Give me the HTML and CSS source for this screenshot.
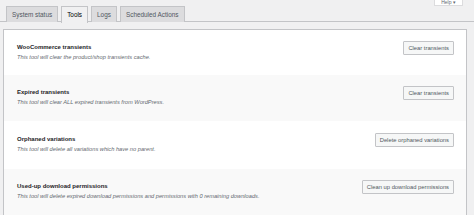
FILE: index.html
```html
<!DOCTYPE html>
<html>
<head>
<meta charset="utf-8">
<link rel="stylesheet" href="styles.css">
</head>
<body>
<div class="help-row"><button class="help">Help ▾</button></div>
<nav class="tabs">
  <a class="tab">System status</a>
  <a class="tab active">Tools</a>
  <a class="tab">Logs</a>
  <a class="tab">Scheduled Actions</a>
</nav>
<div class="table">
  <div class="row">
    <div class="info">
      <div class="title">WooCommerce transients</div>
      <div class="desc">This tool will clear the product/shop transients cache.</div>
    </div>
    <button class="btn">Clear transients</button>
  </div>
  <div class="row alt">
    <div class="info">
      <div class="title">Expired transients</div>
      <div class="desc">This tool will clear ALL expired transients from WordPress.</div>
    </div>
    <button class="btn">Clear transients</button>
  </div>
  <div class="row tall">
    <div class="info">
      <div class="title">Orphaned variations</div>
      <div class="desc">This tool will delete all variations which have no parent.</div>
    </div>
    <button class="btn">Delete orphaned variations</button>
  </div>
  <div class="row alt">
    <div class="info">
      <div class="title">Used-up download permissions</div>
      <div class="desc">This tool will delete expired download permissions and permissions with 0 remaining downloads.</div>
    </div>
    <button class="btn">Clean up download permissions</button>
  </div>
</div>
</body>
</html>
```

FILE: styles.css
```css
* { box-sizing: border-box; }
html, body { margin: 0; padding: 0; }
body {
  background: #f0f0f1;
  font-family: "Liberation Sans", Arial, sans-serif;
  color: #1d2327;
  width: 474px;
  height: 215px;
  overflow: hidden;
}
.help-row {
  display: flex;
  justify-content: flex-end;
  padding-right: 11px;
  height: 6px;
}
.help {
  height: 6px;
  width: 29px;
  padding: 0;
  background: #fff;
  border: 1px solid #dcdcde;
  border-top: none;
  font-family: inherit;
  font-size: 5px;
  line-height: 5px;
  color: #646970;
}
.tabs {
  display: flex;
  gap: 3px;
  padding-left: 6px;
  height: 16px;
  border-bottom: 1px solid #c3c4c7;
}
.tab {
  display: block;
  height: 16px;
  padding: 0 5px;
  border: 1px solid #c3c4c7;
  border-bottom: none;
  background: #dcdcde;
  color: #50575e;
  font-size: 6.4px;
  line-height: 15px;
}
.tab.active {
  background: #f0f0f1;
  color: #000;
  height: 17px;
  margin-bottom: -1px;
}
.table {
  margin: 7px 7px 0 3px;
  background: #fff;
  border: 1px solid #c3c4c7;
}
.row {
  display: flex;
  align-items: center;
  justify-content: space-between;
  height: 45px;
  padding: 0 12px 0 13px;
  background: #fff;
}
.row.alt { background: #f9f9f9; height: 46px; }
.row.tall { height: 48px; }
.info { display: flex; flex-direction: column; gap: 2px; margin-bottom: 2px; }
.title {
  font-size: 6px;
  font-weight: 600;
  line-height: 8px;
  color: #1d2327;
}
.desc {
  font-size: 5.7px;
  font-style: italic;
  line-height: 8px;
  color: #646970;
}
.btn {
  height: 14px;
  padding: 0 4px;
  margin-bottom: 10px;
  background: #f6f7f7;
  border: 1px solid #c3c4c7;
  border-radius: 1px;
  font-family: inherit;
  font-size: 5.8px;
  color: #50575e;
  white-space: nowrap;
}
```
